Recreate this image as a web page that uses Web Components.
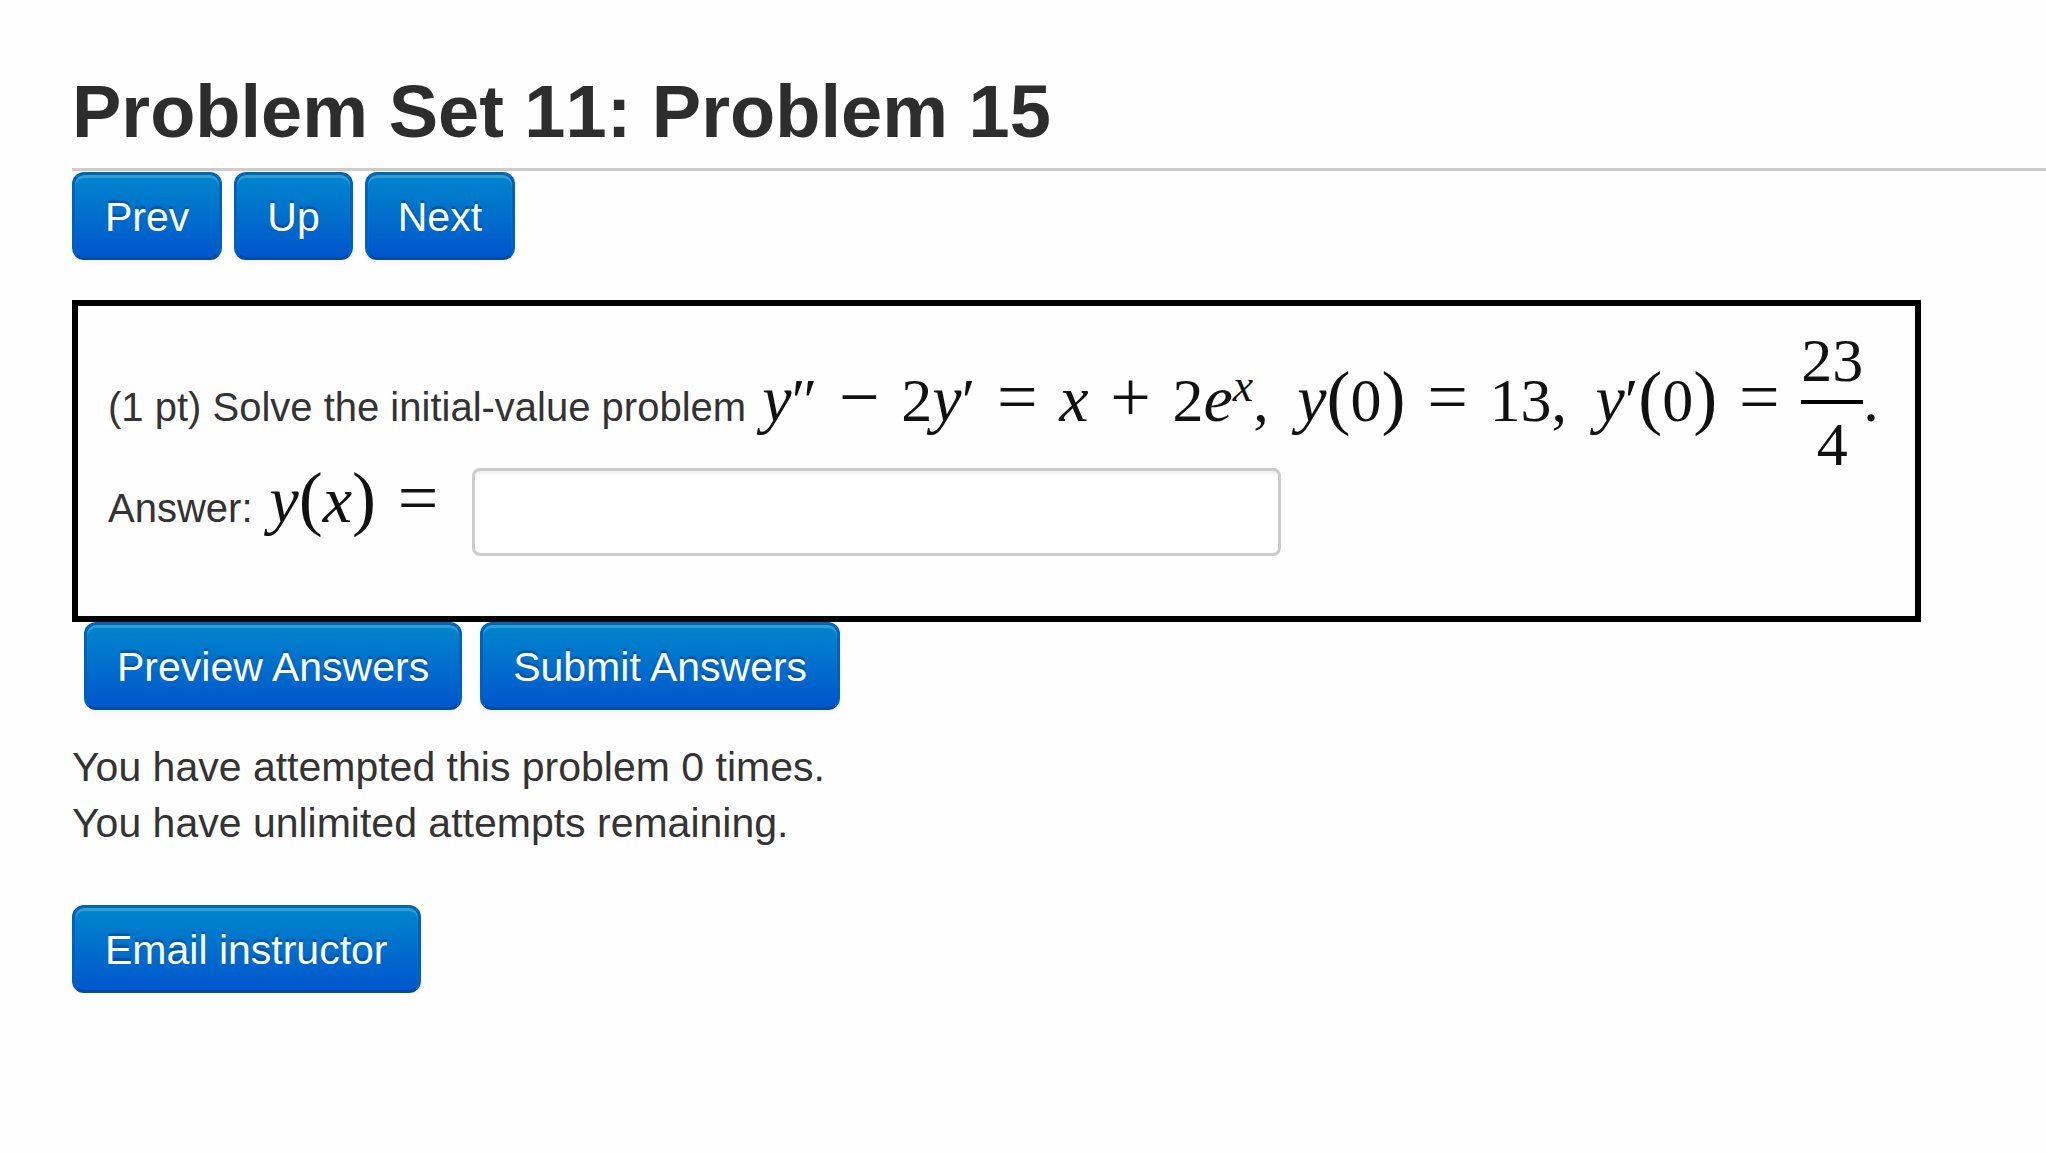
<!DOCTYPE html>
<html lang="en">
<head>
<meta charset="utf-8">
<title>Problem Set 11: Problem 15</title>
<style>
body { margin: 0; background: #fefefe; color: #333; font: 41px/56px "Liberation Sans", Arial, sans-serif; }
</style>
</head>
<body>
<problem-page></problem-page>
<script>
const define = (name, html) => customElements.define(name, class extends HTMLElement {
  constructor() {
    super();
    this.attachShadow({ mode: 'open' }).innerHTML = html;
  }
});

define('page-title', `
<style>
:host { display: block; border-bottom: 3px solid #ccc; padding-bottom: 12px; margin-bottom: 1px; }
h1 { margin: 0; font-size: 74px; line-height: 88px; font-weight: bold; font-kerning: none; color: #2d2d2d; }
</style>
<h1><slot></slot></h1>`);

define('push-button', `
<style>
:host { display: block; }
button {
  display: block; margin: 0; padding: 13px 30px 11px; font: inherit; line-height: 58px; color: #fff; white-space: nowrap;
  border: 3px solid; border-color: #0067b4 #0060bd #004d9f; border-radius: 12px;
  background: linear-gradient(#0088cc, #0055cc) border-box;
  text-shadow: 0 -3px 1px rgba(0, 0, 0, .22);
  box-shadow: inset 0 3px 1px rgba(255, 255, 255, .2), 0 3px 5px rgba(0, 0, 0, .04);
}
</style>
<button type="button"><slot></slot></button>`);

define('button-row', `
<style>
:host { display: flex; gap: 12px; }
:host([form]) { gap: 18px; padding-left: 12px; }
</style>
<slot></slot>`);

/* Formula parts: v = variable, o = operator, b = bracket, s = superscript, p = prime, c = comma */
define('math-text', `
<style>
:host { display: inline-block; margin-left: 5px; white-space: nowrap; color: #111; font: 62px/44px "Liberation Serif", "Times New Roman", serif; }
::slotted(i) { font-size: 66px; }
::slotted(.o) { display: inline-block; width: 84px; text-align: center; font-size: 72px; }
::slotted(.b) { font-size: 72px; }
::slotted(.s) { font-size: 46px; line-height: 0; vertical-align: 20px; }
::slotted(.c) { display: inline-block; width: 44px; }
</style>
<slot></slot>`);

define('math-fraction', `
<style>
:host { display: inline-flex; flex-direction: column; vertical-align: 40px; text-align: center; }
span { display: block; }
.num { padding-bottom: 18px; border-bottom: 4px solid #000; }
.den { padding-top: 18px; }
</style>
<span class="num"><slot name="num"></slot></span>
<span class="den"><slot name="den"></slot></span>`);

define('answer-field', `
<style>
:host { display: flex; align-items: center; gap: 12px; }
label { display: flex; align-items: baseline; gap: 12px; padding-bottom: 12px; }
input {
  box-sizing: border-box; width: 809px; height: 88px; padding: 12px 18px; font: inherit; color: #555;
  border: 3px solid #ccc; border-radius: 8px; background: #fff; box-shadow: inset 0 3px 3px rgba(0, 0, 0, .06);
}
</style>
<label for="answer"><span>Answer:</span><math-text><i>y</i><span class="b">(</span><i>x</i><span class="b">)</span><span class="o">=</span></math-text></label>
<input id="answer" type="text" autocomplete="off">`);

define('problem-box', `
<style>
:host { display: block; border: 6px solid #000; padding: 32px 30px 60px; font-size: 40px; }
p { margin: 0 0 2px; line-height: 44px; white-space: nowrap; }
</style>
<p><slot></slot></p>
<answer-field></answer-field>`);

define('attempt-notes', `
<style>
:host { display: block; padding: 29px 0 54px; }
p { margin: 0; }
</style>
<p>You have attempted this problem 0 times.</p>
<p>You have unlimited attempts remaining.</p>`);

define('problem-page', `
<style>
:host { display: block; padding: 68px 0 0 72px; }
problem-box { margin: 40px 125px 0 0; }
</style>
<page-title>Problem Set 11: Problem 15</page-title>
<button-row>
  <push-button>Prev</push-button><push-button>Up</push-button><push-button>Next</push-button>
</button-row>
<problem-box>(1 pt) Solve the initial-value problem <math-text><i>y</i><span class="p">″</span><span class="o">−</span>2<i>y</i><span class="p">′</span><span class="o">=</span><i>x</i><span class="o">+</span>2<i>e</i><i class="s">x</i><span class="c">,</span><i>y</i><span class="b">(</span>0<span class="b">)</span><span class="o">=</span>13<span class="c">,</span><i>y</i><span class="p">′</span><span class="b">(</span>0<span class="b">)</span><span class="o">=</span><math-fraction><span slot="num">23</span><span slot="den">4</span></math-fraction>.</math-text></problem-box>
<button-row form>
  <push-button>Preview Answers</push-button><push-button>Submit Answers</push-button>
</button-row>
<attempt-notes></attempt-notes>
<button-row><push-button>Email instructor</push-button></button-row>`);
</script>
</body>
</html>
